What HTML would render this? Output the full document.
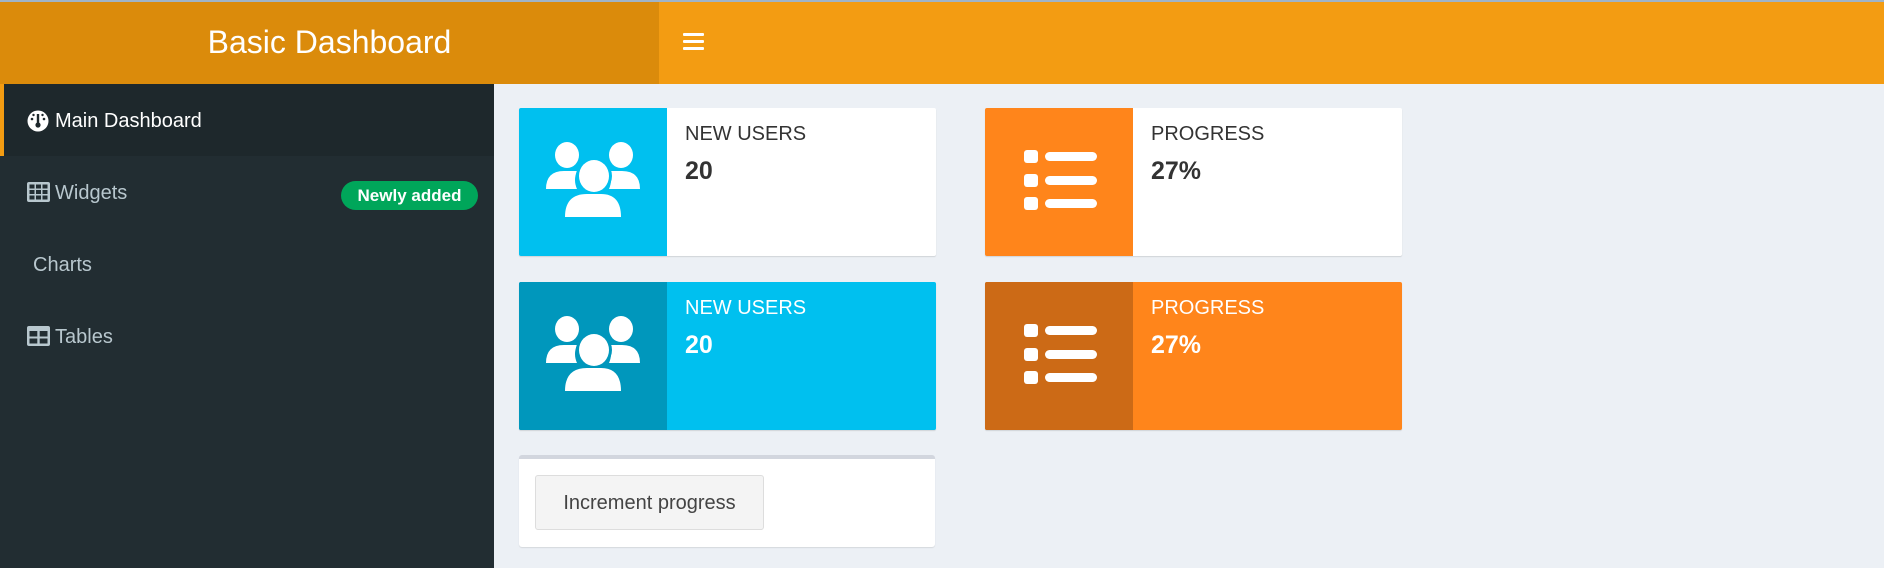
<!DOCTYPE html>
<html><head><meta charset="utf-8"><style>
*{box-sizing:border-box;margin:0;padding:0}
body{width:1884px;height:568px;overflow:hidden;background:#ecf0f5;font-family:"Liberation Sans",sans-serif;position:relative}
.topline{position:absolute;left:0;top:0;width:1884px;height:2px;background:#9fb4c8}
.brand{position:absolute;left:0;top:2px;width:659px;height:82px;background:#db8b0b;color:#fff;font-size:32px;text-align:center;line-height:80px}
.nav{position:absolute;left:659px;top:2px;right:0;height:82px;background:#f39c12}
.ham{position:absolute;left:24px;top:31px;width:21px;height:3px;background:#fff;border-radius:1px;box-shadow:0 7px 0 #fff,0 14px 0 #fff}
.side{position:absolute;left:0;top:84px;width:494px;height:484px;background:#222d32}
.item{position:absolute;left:0;width:494px;height:72px;color:#b8c7ce;font-size:20px;line-height:74px;padding-left:55px}
.item.active{background:#1e282c;color:#fff;border-left:4px solid #f39c12;padding-left:51px}
.ic{position:absolute;left:27px;top:26px}
.item.active .ic{left:23px}
.badge{position:absolute;left:341px;top:97px;width:137px;height:29px;border-radius:15px;background:#00a65a;color:#fff;font-weight:bold;font-size:17px;line-height:29px;text-align:center}
.card{position:absolute;width:417px;height:148px;background:#fff;border-radius:2px;box-shadow:0 1px 1px rgba(0,0,0,.12)}
.card .icon{position:absolute;left:0;top:0;width:148px;height:148px;border-radius:2px 0 0 2px}
.card .t{position:absolute;left:166px;top:15px;font-size:20px;color:#333}
.card .v{position:absolute;left:166px;top:49px;font-size:25px;font-weight:bold;color:#333}
.box{position:absolute;left:519px;top:455px;width:416px;height:92px;background:#fff;border-top:4px solid #d2d6de;border-radius:3px;box-shadow:0 1px 1px rgba(0,0,0,.1)}
.btn{position:absolute;left:16px;top:16px;width:229px;height:55px;background:#f4f4f4;border:1px solid #ddd;border-radius:3px;color:#444;font-size:20px;line-height:55px;text-align:center}
</style></head><body>
<div class="topline"></div>
<div class="brand">Basic Dashboard</div>
<div class="nav"><div class="ham"></div></div>
<div class="side">
 <div class="item active" style="top:0">
  <svg class="ic" width="22" height="22" viewBox="0 0 22 22"><circle cx="11" cy="11" r="10.5" fill="#fff"/><rect x="9.8" y="4" width="2.4" height="10" fill="#1e282c"/><circle cx="11" cy="15" r="2.6" fill="#1e282c"/><circle cx="5" cy="9" r="1.3" fill="#1e282c"/><circle cx="17" cy="9" r="1.3" fill="#1e282c"/><circle cx="6.5" cy="5" r="1.2" fill="#1e282c"/><circle cx="15.5" cy="5" r="1.2" fill="#1e282c"/></svg>
  Main Dashboard</div>
 <div class="item" style="top:72px">
  <svg class="ic" width="23" height="20" viewBox="0 0 23 20"><rect width="23" height="20" rx="2" fill="#b8c7ce"/><g fill="#222d32"><rect x="2.5" y="2.5" width="5" height="4"/><rect x="9" y="2.5" width="5" height="4"/><rect x="15.5" y="2.5" width="5" height="4"/><rect x="2.5" y="8" width="5" height="4"/><rect x="9" y="8" width="5" height="4"/><rect x="15.5" y="8" width="5" height="4"/><rect x="2.5" y="13.5" width="5" height="4"/><rect x="9" y="13.5" width="5" height="4"/><rect x="15.5" y="13.5" width="5" height="4"/></g></svg>
  Widgets</div>
 <div class="badge">Newly added</div>
 <div class="item" style="top:144px;padding-left:33px">Charts</div>
 <div class="item" style="top:216px">
  <svg class="ic" width="23" height="20" viewBox="0 0 23 20"><rect width="23" height="20" rx="2" fill="#b8c7ce"/><g fill="#222d32"><rect x="2.5" y="5" width="7.8" height="5.5"/><rect x="12.7" y="5" width="7.8" height="5.5"/><rect x="2.5" y="12.5" width="7.8" height="5"/><rect x="12.7" y="12.5" width="7.8" height="5"/></g></svg>
  Tables</div>
</div>

<div class="card" style="left:519px;top:108px"><div class="icon" style="background:#00c0ef">
<svg width="148" height="148" viewBox="0 0 148 148"><g fill="#fff"><ellipse cx="48" cy="47" rx="12" ry="13"/><ellipse cx="102" cy="47" rx="12" ry="13"/><path d="M27 81 Q27 63 45 63 L58 63 Q54 72 58 81 Z"/><path d="M121 81 Q121 63 103 63 L90 63 Q94 72 90 81 Z"/><circle cx="75" cy="68" r="18" fill="#00c0ef"/><ellipse cx="75" cy="68" rx="15" ry="16"/><path d="M46 109 Q46 86 68 86 L82 86 Q102 86 102 109 Z"/></g></svg></div>
<div class="t">NEW USERS</div><div class="v">20</div></div>

<div class="card" style="left:985px;top:108px"><div class="icon" style="background:#ff851b">
<svg width="148" height="148" viewBox="0 0 148 148"><g fill="#fff"><rect x="39" y="42" width="14" height="13" rx="3"/><rect x="39" y="66" width="14" height="13" rx="3"/><rect x="39" y="89" width="14" height="13" rx="3"/><rect x="60" y="44" width="52" height="9" rx="4.5"/><rect x="60" y="68" width="52" height="9" rx="4.5"/><rect x="60" y="91" width="52" height="9" rx="4.5"/></g></svg></div>
<div class="t">PROGRESS</div><div class="v">27%</div></div>

<div class="card" style="left:519px;top:282px;background:#00c0ef"><div class="icon" style="background:#0097bc">
<svg width="148" height="148" viewBox="0 0 148 148"><g fill="#fff"><ellipse cx="48" cy="47" rx="12" ry="13"/><ellipse cx="102" cy="47" rx="12" ry="13"/><path d="M27 81 Q27 63 45 63 L58 63 Q54 72 58 81 Z"/><path d="M121 81 Q121 63 103 63 L90 63 Q94 72 90 81 Z"/><circle cx="75" cy="68" r="18" fill="#0097bc"/><ellipse cx="75" cy="68" rx="15" ry="16"/><path d="M46 109 Q46 86 68 86 L82 86 Q102 86 102 109 Z"/></g></svg></div>
<div class="t" style="color:#fff">NEW USERS</div><div class="v" style="color:#fff">20</div></div>

<div class="card" style="left:985px;top:282px;background:#ff851b"><div class="icon" style="background:#cc6a16">
<svg width="148" height="148" viewBox="0 0 148 148"><g fill="#fff"><rect x="39" y="42" width="14" height="13" rx="3"/><rect x="39" y="66" width="14" height="13" rx="3"/><rect x="39" y="89" width="14" height="13" rx="3"/><rect x="60" y="44" width="52" height="9" rx="4.5"/><rect x="60" y="68" width="52" height="9" rx="4.5"/><rect x="60" y="91" width="52" height="9" rx="4.5"/></g></svg></div>
<div class="t" style="color:#fff">PROGRESS</div><div class="v" style="color:#fff">27%</div></div>

<div class="box"><div class="btn">Increment progress</div></div>
</body></html>
